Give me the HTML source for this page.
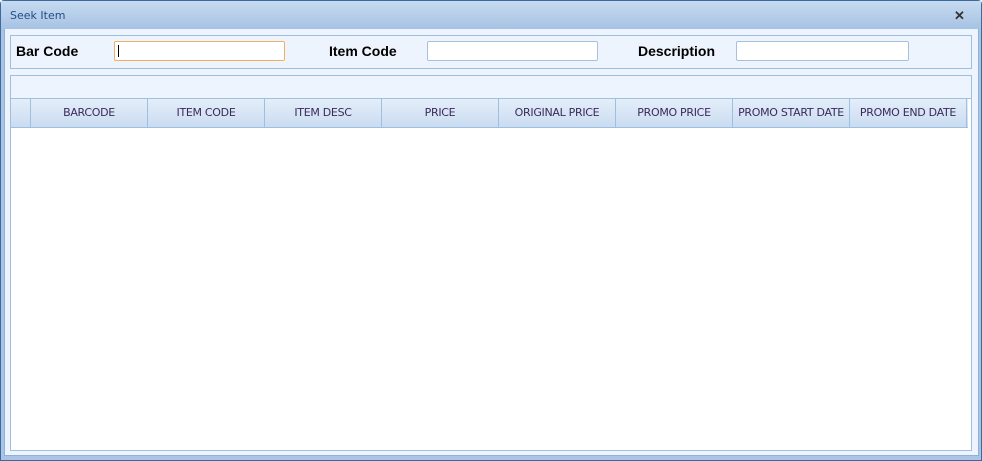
<!DOCTYPE html><html><head><style>
body{margin:0;width:982px;height:461px;overflow:hidden;font-family:"Liberation Sans",sans-serif;}
.win{position:absolute;left:0;top:0;width:980px;height:459px;border:1px solid #3d6a9e;border-radius:4px 4px 0 0;background:#a9c4e4;}
.title{position:absolute;left:0;top:0;width:980px;height:28px;background:linear-gradient(#c7daf0,#a6c3e3);}
.title span{position:absolute;left:9px;top:8px;font-size:11px;color:#1f4e8a;font-family:"DejaVu Sans",sans-serif;}
.x{position:absolute;left:953px;top:7px;font-size:13px;color:#333;font-weight:bold}
.body{position:absolute;left:3px;top:28px;width:973px;height:426px;background:#eef4fd;border-left:1px solid #8fb0d8;border-right:1px solid #8fb0d8;border-bottom:1px solid #8fb0d8;}
.panel{position:absolute;left:10px;top:35px;width:960px;height:32px;border:1px solid #9ebfe0;background:#eef4fd;}
.lbl{position:absolute;top:43px;font-size:14px;font-weight:bold;color:#000}
.inp{position:absolute;top:41px;height:18px;width:169px;border:1px solid #a8c0dc;border-radius:2px;background:#fff}
.grid{position:absolute;left:10px;top:75px;width:960px;height:374px;border:1px solid #9ebfe0;background:#fff;}
.top{position:absolute;left:0;top:0;width:960px;height:22px;background:#eef4fd;border-bottom:1px solid #9ebfe0}
.hdr{position:absolute;left:0;top:23px;width:957px;height:28px;background:linear-gradient(#e4eef9,#cadcf1);border-bottom:1px solid #9ebfe0}
.c{position:absolute;top:0;height:28px;line-height:28px;text-align:center;font-size:11px;color:#3a2a5a;border-left:1px solid #9ebfe0;font-family:"DejaVu Sans",sans-serif;letter-spacing:-0.3px}
</style></head><body>
<div class="win"><div class="title"><span>Seek Item</span><div class="x">✕</div></div><div class="body"></div></div>
<div class="panel"></div>
<div class="lbl" style="left:16px">Bar Code</div>
<div class="inp" style="left:114px;border-color:#f0b060"><div style="position:absolute;left:3px;top:3px;width:1px;height:12px;background:#000"></div></div>
<div class="lbl" style="left:329px">Item Code</div>
<div class="inp" style="left:427px"></div>
<div class="lbl" style="left:638px">Description</div>
<div class="inp" style="left:736px;width:171px"></div>
<div class="grid"><div class="top"></div><div class="hdr">
<div class="c" style="left:19px;width:116px">BARCODE</div>
<div class="c" style="left:136px;width:116px">ITEM CODE</div>
<div class="c" style="left:253px;width:116px">ITEM DESC</div>
<div class="c" style="left:370px;width:116px">PRICE</div>
<div class="c" style="left:487px;width:116px">ORIGINAL PRICE</div>
<div class="c" style="left:604px;width:116px">PROMO PRICE</div>
<div class="c" style="left:721px;width:116px">PROMO START DATE</div>
<div class="c" style="left:838px;width:116px;border-right:1px solid #9ebfe0">PROMO END DATE</div>
</div></div>
</body></html>
